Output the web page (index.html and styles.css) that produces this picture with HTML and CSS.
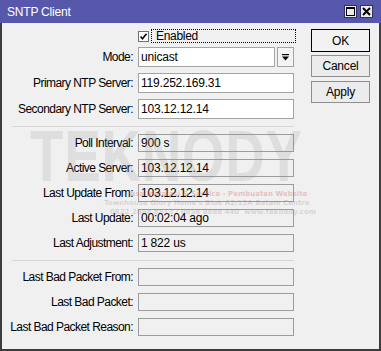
FILE: index.html
```html
<!DOCTYPE html>
<html>
<head>
<meta charset="utf-8">
<link rel="stylesheet" href="styles.css">
</head>
<body>
<div class="window">
  <div class="titlebar">
    <span class="title">SNTP Client</span>
    <div class="tbtns">
      <span class="tb"><svg width="13" height="13" viewBox="0 0 13 13"><rect x="2.5" y="2.5" width="8" height="8" fill="none" stroke="#000" stroke-width="1"/><rect x="2.5" y="2.5" width="8" height="1.5" fill="#000"/></svg></span>
      <span class="tb"><svg width="13" height="13" viewBox="0 0 13 13"><path d="M3 3 L10 10 M10 3 L3 10" stroke="#000" stroke-width="2"/></svg></span>
    </div>
  </div>
  <div class="content">
    <div class="form">
      <div class="row enabled-row">
        <span class="lbl"></span>
        <div class="checkwrap">
          <span class="checkbox"><svg width="9" height="9" viewBox="0 0 9 9"><path d="M1.5 4.5 L3.5 6.8 L7.5 1.8" fill="none" stroke="#000" stroke-width="1.6"/></svg></span>
          <span class="focus">Enabled</span>
        </div>
      </div>
      <div class="section edit">
        <div class="row">
          <span class="lbl">Mode:</span>
          <div class="combo"><span class="field">unicast</span><span class="drop"><svg width="9" height="9" viewBox="0 0 9 9"><rect x="1" y="1" width="7" height="1.2" fill="#000"/><path d="M1 3.5 H8 L4.5 7.5 Z" fill="#000"/></svg></span></div>
        </div>
        <div class="row">
          <span class="lbl">Primary NTP Server:</span>
          <span class="field">119.252.169.31</span>
        </div>
        <div class="row">
          <span class="lbl">Secondary NTP Server:</span>
          <span class="field">103.12.12.14</span>
        </div>
      </div>
      <div class="sep"></div>
      <div class="section ro">
        <div class="row"><span class="lbl">Poll Interval:</span><span class="field">900 s</span></div>
        <div class="row"><span class="lbl">Active Server:</span><span class="field">103.12.12.14</span></div>
        <div class="row"><span class="lbl">Last Update From:</span><span class="field">103.12.12.14</span></div>
        <div class="row"><span class="lbl">Last Update:</span><span class="field">00:02:04 ago</span></div>
        <div class="row"><span class="lbl">Last Adjustment:</span><span class="field">1 822 us</span></div>
      </div>
      <div class="sep sep2"></div>
      <div class="section ro">
        <div class="row"><span class="lbl">Last Bad Packet From:</span><span class="field"></span></div>
        <div class="row"><span class="lbl">Last Bad Packet:</span><span class="field"></span></div>
        <div class="row"><span class="lbl">Last Bad Packet Reason:</span><span class="field"></span></div>
      </div>
    </div>
    <div class="buttons">
      <span class="btn ok">OK</span>
      <span class="btn cancel">Cancel</span>
      <span class="btn apply">Apply</span>
    </div>
  </div>
  <div class="watermark">TEKNODY</div>
  <div class="wm-lines">
    <div class="l1">Jasa Instalasi &amp; Service - Pembuatan Website</div>
    <div class="l2">Townhouse Glory Home's Blok A2/12A Batam Centre</div>
    <div class="l3">0822 2888 8813 / 0858 8888 440 &nbsp;www.teknody.com</div>
  </div>
</div>
</body>
</html>
```
FILE: styles.css
```css
html, body {
  margin: 0;
  padding: 0;
  background: #f0f0f0;
}
.window {
  position: relative;
  width: 381px;
  height: 351px;
  box-sizing: border-box;
  background: #f0f0f0;
  font-family: "Liberation Sans", Arial, sans-serif;
  font-size: 12px;
  color: #000;
  overflow: hidden;
}
.titlebar {
  height: 23px;
  background: #5757ac;
  display: flex;
  align-items: center;
  padding-left: 7px;
  color: #fff;
}
.title {
  flex: 1;
  letter-spacing: -0.2px;
}
.tbtns {
  display: flex;
  gap: 3px;
  margin-right: 8px;
}
.tb {
  width: 13px;
  height: 13px;
  box-sizing: border-box;
  background: #ececec;
  border: 1px solid #303060;
  display: flex;
  align-items: center;
  justify-content: center;
}
.tb svg {
  display: block;
  margin: -1px;
}
.content {
  display: flex;
  height: 328px;
  box-sizing: border-box;
  border: 2px solid #3c3c3c;
  border-top: 0;
}
.form {
  width: 292px;
  padding-top: 6px;
}
.row {
  display: grid;
  grid-template-columns: 132px 156px;
  column-gap: 4px;
  align-items: center;
}
.lbl {
  text-align: right;
  white-space: nowrap;
  letter-spacing: -0.55px;
  padding-right: 1px;
}
.enabled-row {
  height: 14px;
}
.checkwrap {
  display: flex;
  align-items: center;
  height: 14px;
}
.checkbox {
  width: 11px;
  height: 11px;
  box-sizing: border-box;
  border: 1px solid #707070;
  background: #fff;
  display: flex;
  align-items: center;
  justify-content: center;
}
.focus {
  margin-left: 2px;
  width: 145px;
  height: 14px;
  box-sizing: border-box;
  border: 1px dotted #000;
  padding-left: 4px;
  line-height: 12px;
  flex-shrink: 0;
  letter-spacing: -0.3px;
}
.section {
  display: flex;
  flex-direction: column;
}
.edit {
  margin-top: 4px;
  gap: 6px;
}
.edit .row {
  height: 20px;
}
.field {
  display: block;
  box-sizing: border-box;
  border: 1px solid #a3a3a3;
  padding-left: 2px;
  white-space: nowrap;
  letter-spacing: -0.2px;
}
.edit .field {
  height: 20px;
  line-height: 18px;
  background: #fff;
}
.combo {
  display: flex;
  gap: 2px;
}
.combo .field {
  width: 137px;
}
.drop {
  width: 17px;
  height: 20px;
  box-sizing: border-box;
  border: 1px solid #a3a3a3;
  background: #f4f4f4;
  display: flex;
  align-items: center;
  justify-content: center;
}
.sep {
  margin-top: 7px;
  margin-left: 10px;
  width: 282px;
  height: 1px;
  background: #d6d6d6;
}
.sep2 {
  margin-top: 8px;
}
.ro {
  margin-top: 7px;
  gap: 7px;
}
.ro .row {
  height: 18px;
}
.ro .field {
  height: 18px;
  line-height: 16px;
  background: #f0f0f0;
  border-color: #9c9c9c;
}
.buttons {
  margin-left: 17px;
  padding-top: 6px;
  width: 59px;
  display: flex;
  flex-direction: column;
}
.btn {
  display: flex;
  align-items: center;
  justify-content: center;
  box-sizing: border-box;
  height: 22px;
  border: 1px solid #8e8e8e;
  background: #ececec;
  letter-spacing: -0.2px;
}
.ok {
  height: 23px;
  border: 1px solid #000;
  background: #f2f2f2;
}
.cancel {
  margin-top: 3px;
}
.apply {
  margin-top: 4px;
}
.watermark {
  position: absolute;
  left: 30px;
  top: 116px;
  font-family: "Liberation Sans", Arial, sans-serif;
  font-weight: bold;
  font-size: 72px;
  line-height: 80px;
  color: rgba(150, 150, 150, 0.2);
  transform: scaleX(0.76);
  transform-origin: left top;
  letter-spacing: 1px;
  pointer-events: none;
  white-space: nowrap;
}
.wm-lines {
  position: absolute;
  left: 0;
  top: 0;
  font-family: "DejaVu Sans", sans-serif;
  font-weight: bold;
  font-size: 7px;
  white-space: nowrap;
  pointer-events: none;
}
.wm-lines div {
  position: absolute;
}
.l1 {
  left: 128px;
  top: 190px;
  color: rgba(210, 90, 90, 0.35);
}
.l2 {
  left: 104px;
  top: 199px;
  color: rgba(150, 130, 130, 0.28);
}
.l3 {
  left: 110px;
  top: 208px;
  color: rgba(150, 130, 130, 0.28);
}
```
